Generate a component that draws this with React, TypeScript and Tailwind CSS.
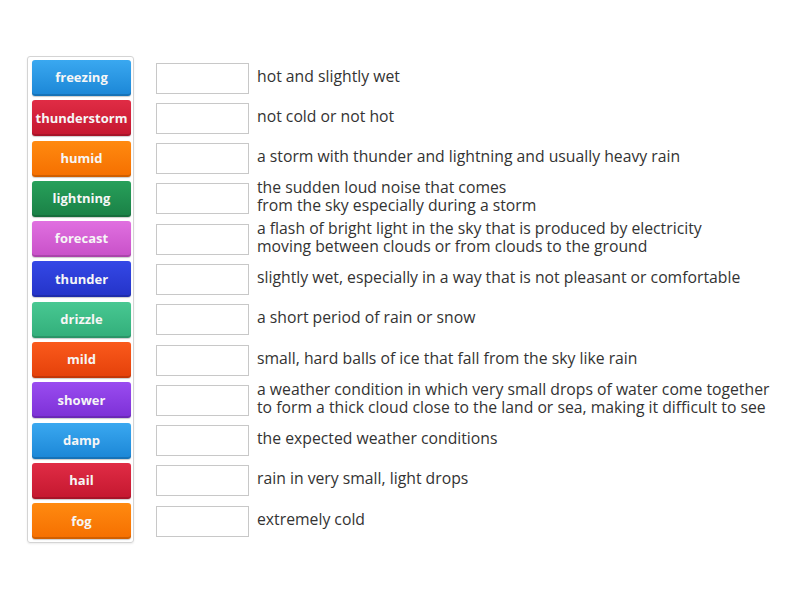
import React from "react";

interface Tile {
  word: string;
  from: string;
  to: string;
}

const tiles: Tile[] = [
  { word: "freezing", from: "#3aa8f0", to: "#1b86d6" },
  { word: "thunderstorm", from: "#e02c45", to: "#c4172f" },
  { word: "humid", from: "#ff8a10", to: "#f56f00" },
  { word: "lightning", from: "#27a05a", to: "#1a8046" },
  { word: "forecast", from: "#e070e0", to: "#c850c8" },
  { word: "thunder", from: "#3448e6", to: "#2433c8" },
  { word: "drizzle", from: "#48c892", to: "#32ae7a" },
  { word: "mild", from: "#fa5a1c", to: "#e4400a" },
  { word: "shower", from: "#9a4cf0", to: "#7c30d6" },
  { word: "damp", from: "#3aa8f0", to: "#1b86d6" },
  { word: "hail", from: "#e02c45", to: "#c4172f" },
  { word: "fog", from: "#ff8a10", to: "#f56f00" },
];

const definitions: string[][] = [
  ["hot and slightly wet"],
  ["not cold or not hot"],
  ["a storm with thunder and lightning and usually heavy rain"],
  ["the sudden loud noise that comes", "from the sky especially during a storm"],
  [
    "a flash of bright light in the sky that is produced by electricity",
    "moving between clouds or from clouds to the ground",
  ],
  ["slightly wet, especially in a way that is not pleasant or comfortable"],
  ["a short period of rain or snow"],
  ["small, hard balls of ice that fall from the sky like rain"],
  [
    "a weather condition in which very small drops of water come together",
    "to form a thick cloud close to the land or sea, making it difficult to see",
  ],
  ["the expected weather conditions"],
  ["rain in very small, light drops"],
  ["extremely cold"],
];

const App: React.FC = () => {
  return (
    <div
      className="w-[800px] h-[600px] bg-white flex items-start pl-[27px] pt-[56px]"
      style={{ fontFamily: '"Open Sans", sans-serif' }}
    >
      {/* word tiles */}
      <div className="flex flex-col gap-[4.3px] border border-[#d4d4d4] rounded-[3px] pl-[4px] pr-[2px] py-[3px] shadow-[0_1px_2px_rgba(0,0,0,0.08)]">
        {tiles.map((t) => (
          <div
            key={t.word}
            className="w-[99px] h-[36px] rounded-[3px] flex items-center justify-center text-[13px] font-bold text-[#f6f6f6] shadow-[inset_0_-2px_0_rgba(0,0,0,0.15),0_1px_1px_rgba(0,0,0,0.2)]"
            style={{ background: `linear-gradient(to bottom, ${t.from}, ${t.to})` }}
          >
            {t.word}
          </div>
        ))}
      </div>

      {/* answer rows */}
      <div className="flex flex-col gap-[4.3px] pt-[4px] ml-[22px]">
        {definitions.map((lines, i) => (
          <div key={i} className="h-[36px] flex items-center">
            <div className="w-[93px] h-[31px] border border-[#c8c8c8] bg-white shrink-0" />
            <div className="ml-[8px] pb-[5px] text-[15.75px] leading-[18px] text-[#333333] whitespace-nowrap">
              {lines.map((l) => (
                <div key={l}>{l}</div>
              ))}
            </div>
          </div>
        ))}
      </div>
    </div>
  );
};

export default App;
